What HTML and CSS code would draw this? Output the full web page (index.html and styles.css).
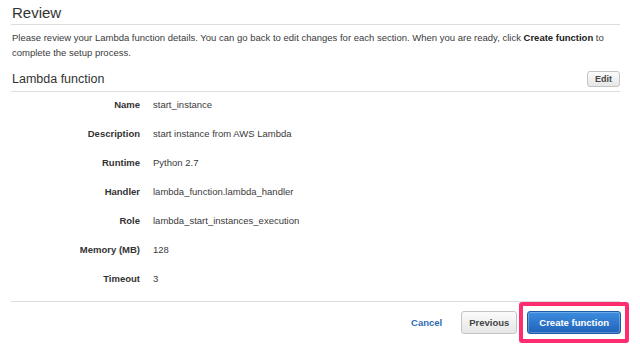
FILE: index.html
```html
<!DOCTYPE html>
<html lang="en">
<head>
  <meta charset="UTF-8">
  <meta name="viewport" content="width=device-width, initial-scale=1.0">
  <title>Review - Lambda function</title>
  <link rel="stylesheet" href="styles.css">
</head>
<body>

  <div class="page">
    <h1 class="title">Review</h1>
    <p class="intro">Please review your Lambda function details. You can go back to edit changes for each section. When you are ready, click <b>Create function</b> to complete the setup process.</p>

    <div class="section-head">
      <h2>Lambda function</h2>
      <button class="btn small">Edit</button>
    </div>

    <div class="details">
      <div class="label">Name</div><div class="value">start_instance</div>
      <div class="label">Description</div><div class="value">start instance from AWS Lambda</div>
      <div class="label">Runtime</div><div class="value">Python 2.7</div>
      <div class="label">Handler</div><div class="value">lambda_function.lambda_handler</div>
      <div class="label">Role</div><div class="value">lambda_start_instances_execution</div>
      <div class="label">Memory (MB)</div><div class="value">128</div>
      <div class="label">Timeout</div><div class="value">3</div>
    </div>

    <div class="footer">
      <a class="cancel" href="#">Cancel</a>
      <button class="btn">Previous</button>
      <span class="highlight">
        <button class="btn primary">Create function</button>
      </span>
    </div>
  </div>

</body>
</html>
```

FILE: styles.css
```css
body {
  margin: 0;
  background: #fff;
  font-family: 'Liberation Sans', Arial, sans-serif;
  color: #444;
}

.page {
  width: 609px;
  margin-left: 11px;
}

.title {
  font-size: 15px;
  font-weight: normal;
  color: #333;
  margin: 0;
  padding: 6px 0 5px 1px;
  border-bottom: 1px solid #ddd;
  line-height: 13px;
}

.intro {
  font-size: 9.5px;
  line-height: 15px;
  margin: 5px 0 0 1px;
  color: #3a3a3a;
}

.intro b {
  color: #222;
}

.section-head {
  display: flex;
  justify-content: space-between;
  align-items: center;
  margin-top: 10px;
  padding-bottom: 4px;
  border-bottom: 1px solid #ddd;
}

.section-head h2 {
  font-size: 12.5px;
  font-weight: normal;
  color: #333;
  margin: 0 0 0 1px;
}

.details {
  display: grid;
  grid-template-columns: 129px 1fr;
  grid-auto-rows: 24px;
  row-gap: 5px;
  column-gap: 13px;
  font-size: 9.5px;
  padding-bottom: 11px;
  border-bottom: 1px solid #ddd;
}

.label,
.value {
  display: flex;
  align-items: center;
}

.label {
  justify-content: flex-end;
  font-weight: bold;
  color: #333;
}

.value {
  color: #3a3a3a;
}

.footer {
  display: flex;
  justify-content: flex-end;
  align-items: center;
  margin-right: -9px;
}

.cancel {
  font-size: 9.5px;
  font-weight: bold;
  color: #2e6db4;
  text-decoration: none;
  margin-right: 19px;
}

.btn {
  font-family: 'Liberation Sans', Arial, sans-serif;
  font-size: 9.5px;
  font-weight: bold;
  color: #444;
  height: 23px;
  padding: 0 7px;
  border: 1px solid #c4c4c4;
  border-radius: 3px;
  background: linear-gradient(#fbfbfb, #e6e6e6);
  cursor: pointer;
}

.btn.small {
  font-size: 9px;
  height: 16px;
  padding: 0 7px;
  margin-top: 1px;
}

.highlight {
  display: inline-flex;
  margin-left: 2px;
  padding: 5px 4px 5px;
  border: 4px solid #ff2d6f;
  border-radius: 3px;
  background: #fff;
}

.btn.primary {
  color: #fff;
  padding: 0 11px;
  border-color: #1c5aa6;
  background: linear-gradient(#3d8de0, #1f63b9);
  box-shadow: inset 0 0 0 1px rgba(255, 255, 255, 0.25);
}
```
